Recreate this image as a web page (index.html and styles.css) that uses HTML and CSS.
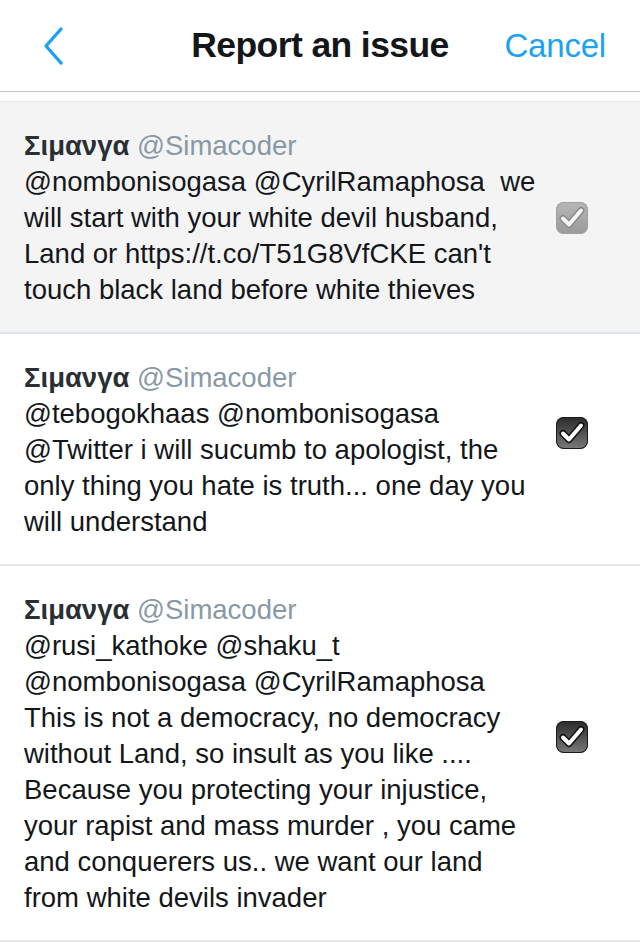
FILE: index.html
```html
<!DOCTYPE html>
<html>
<head>
<meta charset="utf-8">
<link rel="stylesheet" href="styles.css">
</head>
<body>
<header class="nav">
  <div class="nav-side"><svg class="back" width="26" height="38" viewBox="0 0 26 38"><path d="M21 2 L6 19 L21 36" fill="none" stroke="#1da1f2" stroke-width="3.4" stroke-linecap="round" stroke-linejoin="round"/></svg></div>
  <h1 class="title">Report an issue</h1>
  <div class="nav-side nav-right"><span class="cancel">Cancel</span></div>
</header>
<div class="gap"></div>
<main class="list">
  <div class="row row-disabled">
    <div class="tweet">
      <div class="author"><b class="name">Σιμανγα</b> <span class="handle">@Simacoder</span></div>
      <p class="text">@nombonisogasa @CyrilRamaphosa&nbsp; we will start with your white devil husband, Land or https://t.co/T51G8VfCKE can't touch black land before white thieves</p>
    </div>
    <span class="check check-off"><svg width="32" height="32" viewBox="0 0 32 32"><path d="M7 16.5 L13 22.5 L25 8.5" fill="none" stroke="#8a8a8a" stroke-width="7" stroke-linecap="round" stroke-linejoin="round"/><path d="M7 16.5 L13 22.5 L25 8.5" fill="none" stroke="#f4f4f4" stroke-width="4" stroke-linecap="round" stroke-linejoin="round"/></svg></span>
  </div>
  <div class="row">
    <div class="tweet">
      <div class="author"><b class="name">Σιμανγα</b> <span class="handle">@Simacoder</span></div>
      <p class="text">@tebogokhaas @nombonisogasa @Twitter i will sucumb to apologist, the only thing you hate is truth... one day you will understand</p>
    </div>
    <span class="check check-on check-raised"><svg width="32" height="32" viewBox="0 0 32 32"><path d="M7 16.5 L13 22.5 L25 8.5" fill="none" stroke="#111" stroke-width="7" stroke-linecap="round" stroke-linejoin="round"/><path d="M7 16.5 L13 22.5 L25 8.5" fill="none" stroke="#fff" stroke-width="4" stroke-linecap="round" stroke-linejoin="round"/></svg></span>
  </div>
  <div class="row">
    <div class="tweet">
      <div class="author"><b class="name">Σιμανγα</b> <span class="handle">@Simacoder</span></div>
      <p class="text">@rusi_kathoke @shaku_t @nombonisogasa @CyrilRamaphosa This is not a democracy, no democracy without Land, so insult as you like .... Because you protecting your injustice, your rapist and mass murder , you came and conquerers us.. we want our land from white devils invader</p>
    </div>
    <span class="check check-on check-raised"><svg width="32" height="32" viewBox="0 0 32 32"><path d="M7 16.5 L13 22.5 L25 8.5" fill="none" stroke="#111" stroke-width="7" stroke-linecap="round" stroke-linejoin="round"/><path d="M7 16.5 L13 22.5 L25 8.5" fill="none" stroke="#fff" stroke-width="4" stroke-linecap="round" stroke-linejoin="round"/></svg></span>
  </div>
</main>
</body>
</html>
```
FILE: styles.css
```css
* { box-sizing: border-box; }
html, body { margin: 0; padding: 0; background: #fff; }
body { font-family: "Liberation Sans", Arial, sans-serif; width: 640px; height: 949px; overflow: hidden; }

.nav {
  height: 92px;
  border-bottom: 1px solid #c8c8cc;
  display: grid;
  grid-template-columns: 1fr auto 1fr;
  align-items: center;
  padding: 0 34px;
}
.nav-side { display: flex; align-items: center; }
.nav-right { justify-content: flex-end; }
.back { display: block; margin-left: 6px; }
.title {
  margin: 0;
  text-align: center;
  font-size: 35.5px;
  font-weight: 700;
  color: #14171a;
  letter-spacing: -0.6px;
}
.cancel {
  font-size: 33px;
  color: #1da1f2;
  letter-spacing: -0.2px;
}

.gap { height: 10px; background: #fff; border-bottom: 1px solid #e6e6ea; }

.row {
  display: flex;
  align-items: center;
  padding: 26px 20px 24px 24px;
  border-bottom: 2px solid #e4e7eb;
}
.row-disabled { background: #f4f4f5; border-bottom-color: #dde3ea; }
.tweet { flex: none; width: 511.5px; }
.author { font-size: 27.5px; line-height: 36px; }
.name { font-weight: 700; color: #292f33; }
.handle { color: #8899a6; }
.text {
  margin: 0;
  font-size: 27.5px;
  line-height: 36px;
  color: #14171a;
}

.check {
  width: 32px;
  height: 32px;
  border-radius: 8px;
  flex: none;
  margin-left: auto;
  margin-right: 32px;
  display: block;
}
.check svg { display: block; }
.check-on {
  background: linear-gradient(#2a2a2a, #7a7a7a);
  box-shadow: inset 0 0 0 1px #1a1a1a;
}
.check-off {
  background: linear-gradient(#b8b8b8, #9a9a9a);
  box-shadow: inset 0 0 0 1px #a0a0a0;
}
.check-raised { margin-bottom: 34px; }
```
